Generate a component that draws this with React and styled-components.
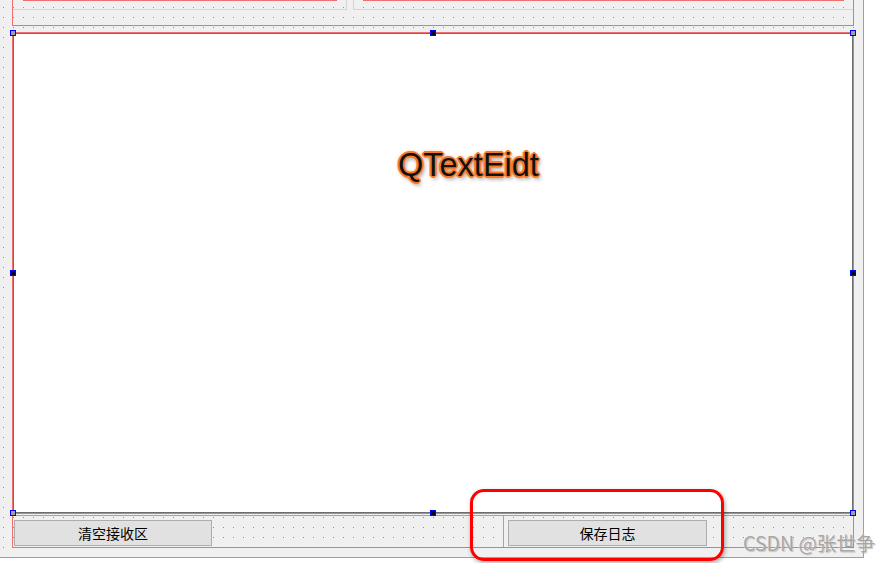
import React from 'react';
import styled, { createGlobalStyle } from 'styled-components';

const GlobalStyle = createGlobalStyle`
    html, body {
        margin: 0;
        padding: 0;
        background: #ffffff;
        font-family: "Liberation Sans", "Noto Sans CJK SC", sans-serif;
    }
`;

const Page = styled.div`
    position: relative;
    width: 890px;
    height: 563px;
    overflow: hidden;
    background: #ffffff;
`;

const Form = styled.div`
    box-sizing: border-box;
    width: 864px;
    height: 558px;
    padding: 0 9px 9px 12px;
    display: flex;
    flex-direction: column;
    border-right: 1px solid #a0a0a0;
    border-bottom: 1px solid #a0a0a0;
    background-color: #f0f0f0;
    background-image:
        linear-gradient(to bottom, transparent 1px, #f0f0f0 1px),
        linear-gradient(to right, #8e8e8e 1px, transparent 1px);
    background-size: 10px 10px, 10px 10px;
    background-position: 3px 7px, 3px 7px;
`;

const TopLayout = styled.div`
    box-sizing: border-box;
    height: 26px;
    display: flex;
    gap: 6px;
    border: 1px solid #f07070;
    border-top: none;
`;

const GroupStub = styled.div`
    box-sizing: border-box;
    height: 10px;
    width: ${p => p.$w}px;
    border-bottom: 1px solid #d4d4d4;
    ${p => (p.$side === 'left' ? 'border-right' : 'border-left')}: 1px solid #d4d4d4;
`;

const InnerFrameEdge = styled.div`
    height: 1px;
    margin: 0 ${p => p.$r}px 0 ${p => p.$l}px;
    background: #f07070;
`;

const TextEditFrame = styled.div`
    position: relative;
    box-sizing: border-box;
    margin-top: 6px;
    height: 482px;
    border: 1px solid #f07070;
`;

const TextEditBox = styled.div`
    box-sizing: border-box;
    height: 100%;
    border: 1px solid #6e6e6e;
    background: #ffffff;
`;

const Label = styled.div`
    position: absolute;
    left: 385px;
    top: 116px;
    font-family: "Liberation Sans", Arial, sans-serif;
    font-size: 32.5px;
    line-height: 1;
    color: #111111;
    text-shadow:
        -1px -1px 0 #f47a2a, 1px -1px 0 #f47a2a, -1px 1px 0 #f47a2a, 1px 1px 0 #f47a2a,
        0 -2px 0 #f47a2a, 0 2px 0 #f47a2a, -2px 0 0 #f47a2a, 2px 0 0 #f47a2a,
        0 0 4px #f06a10, 2px 3px 4px rgba(0, 0, 0, 0.45);
`;

const Handle = styled.div`
    position: absolute;
    box-sizing: border-box;
    width: 6px;
    height: 6px;
    border: 1px solid #0000ff;
    background: ${p => (p.$corner ? '#9aa0b0' : '#000033')};
    ${p => p.$pos}
`;

const BottomLayout = styled.div`
    box-sizing: border-box;
    height: 34px;
    padding-top: 1px;
    border: 1px solid #f07070;
    border-top: none;
`;

const BottomRow = styled.div`
    display: flex;
    height: 32px;
    box-sizing: border-box;
    border-top: 1px solid #7cc07c;
`;

const Cell = styled.div`
    box-sizing: border-box;
    width: ${p => p.$w}px;
    padding: 4px 0 0 ${p => p.$pad}px;
    ${p => (p.$divider ? 'border-right: 1px solid #7cc07c;' : '')}
`;

const PushButton = styled.button`
    box-sizing: border-box;
    width: ${p => p.$w}px;
    height: 26px;
    margin: 0;
    padding: 0;
    border: 1px solid #adadad;
    background: #e1e1e1;
    font-family: "Noto Sans CJK SC", sans-serif;
    font-size: 14px;
    color: #000000;
    line-height: 24px;
`;

const Callout = styled.div`
    position: absolute;
    box-sizing: border-box;
    left: 470px;
    top: 489px;
    width: 254px;
    height: 72px;
    border: 3px solid #ff0000;
    border-radius: 14px;
    box-shadow: 1px 2px 4px rgba(0, 0, 0, 0.35);
    pointer-events: none;
`;

const Watermark = styled.div`
    position: absolute;
    left: 743px;
    top: 531px;
    font-family: "Noto Sans CJK SC", sans-serif;
    font-size: 19.5px;
    line-height: 24px;
    color: #a6a6a6;
    text-shadow: 0 0 2px #ffffff, 1px 1px 1px rgba(0, 0, 0, 0.25);
    white-space: nowrap;
`;

const handles = [
    { corner: true, pos: 'left:-3px;top:-3px;' },
    { corner: false, pos: 'left:calc(50% - 3px);top:-3px;' },
    { corner: true, pos: 'right:-3px;top:-3px;' },
    { corner: false, pos: 'left:-3px;top:calc(50% - 3px);' },
    { corner: false, pos: 'right:-3px;top:calc(50% - 3px);' },
    { corner: true, pos: 'left:-3px;bottom:-3px;' },
    { corner: false, pos: 'left:calc(50% - 3px);bottom:-3px;' },
    { corner: true, pos: 'right:-3px;bottom:-3px;' },
];

export default function App() {
    return (
        <>
            <GlobalStyle />
            <Page>
                <Form>
                    <TopLayout>
                        <GroupStub $w={334} $side="left">
                            <InnerFrameEdge $l={10} $r={9} />
                        </GroupStub>
                        <GroupStub $w={500} $side="right">
                            <InnerFrameEdge $l={9} $r={9} />
                        </GroupStub>
                    </TopLayout>
                    <TextEditFrame>
                        <TextEditBox />
                        <Label>QTextEidt</Label>
                        {handles.map((h, i) => (
                            <Handle key={i} $corner={h.corner} $pos={h.pos} />
                        ))}
                    </TextEditFrame>
                    <BottomLayout>
                        <BottomRow>
                            <Cell $w={491} $pad={1} $divider>
                                <PushButton $w={198}>清空接收区</PushButton>
                            </Cell>
                            <Cell $w={349} $pad={4}>
                                <PushButton $w={199}>保存日志</PushButton>
                            </Cell>
                        </BottomRow>
                    </BottomLayout>
                </Form>
                <Callout />
                <Watermark>CSDN @张世争</Watermark>
            </Page>
        </>
    );
}
